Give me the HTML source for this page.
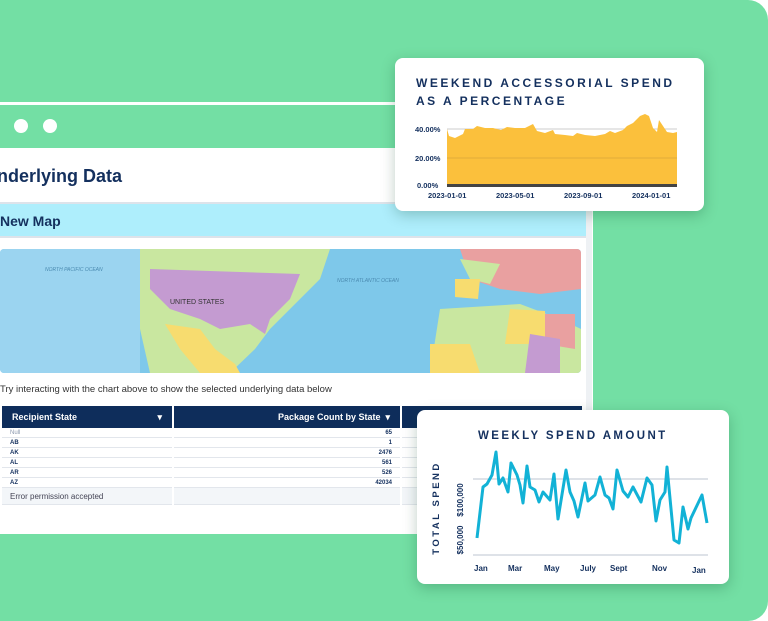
<!DOCTYPE html>
<html><head><meta charset="utf-8"><style>
*{margin:0;padding:0;box-sizing:border-box}
body{width:768px;height:621px;background:#fff;font-family:"Liberation Sans",sans-serif;overflow:hidden;position:relative}
.bg{position:absolute;left:0;top:0;width:768px;height:621px;background:#73dfa4;border-radius:0 20px 20px 0}
.win{position:absolute;left:-4px;top:102px;width:597px;height:432px;border:3px solid #fff;border-radius:0 6px 6px 0}
.dot{position:absolute;top:119px;width:14px;height:14px;border-radius:50%;background:#fff}
.content{position:absolute;left:0;top:148px;width:586px;height:383px;background:#fff}
.side{position:absolute;left:586px;top:148px;width:6px;height:383px;background:#eef1f4}
.title{position:absolute;left:-3px;top:166px;font-size:18px;font-weight:bold;color:#14305e}
.band{position:absolute;left:0;top:202px;width:586px;height:36px;background:#aeeefc;border-top:2px solid #dde3ea;border-bottom:2px solid #dde3ea}
.band span{position:absolute;left:0;top:9px;font-size:14px;font-weight:bold;color:#14305e}
.note{position:absolute;left:0;top:384px;font-size:9.5px;color:#333}
table{position:absolute;left:0;top:406px;border-collapse:separate;border-spacing:2px 0;font-size:6px;color:#14305e}
th{background:#0e2d5b;color:#fff;height:22px;font-size:9px;text-align:left;padding:0 10px}
td{height:10px;border-bottom:1px solid #e2e6ec;background:#fff;font-weight:bold;padding:0 8px}
.card{position:absolute;background:#fff;border-radius:8px;box-shadow:0 4px 14px rgba(0,60,30,.25)}
.h{font-weight:bold;color:#14305e;letter-spacing:2.5px;font-size:12px;white-space:nowrap}
</style></head><body>
<div class="bg"></div>
<div class="win"></div>
<div class="dot" style="left:14px"></div><div class="dot" style="left:43px"></div>
<div class="content"></div><div class="side"></div>
<div class="title">nderlying Data</div>
<div class="band"><span>New Map</span></div>
<svg style="position:absolute;left:0;top:249px" width="581" height="124">
<defs><clipPath id="m"><rect width="581" height="124" rx="4"/></clipPath></defs>
<g clip-path="url(#m)">
<rect width="581" height="124" fill="#7ec8ea"/>
<rect x="0" y="0" width="140" height="124" fill="#9bd4f0"/>
<path d="M140 0 H330 L320 30 L300 50 L270 80 L255 100 L230 124 H150 L140 80 Z" fill="#c9e7a0"/>
<path d="M150 20 L300 25 L290 50 L270 70 L265 85 L250 75 L220 80 L200 70 L170 60 L150 40 Z" fill="#c49bd1"/>
<path d="M165 75 L200 80 L215 100 L235 115 L240 124 H200 L180 100 Z" fill="#f7dc6f"/>
<path d="M460 0 H581 V40 L540 45 L500 40 L470 30 Z" fill="#e9a0a0"/>
<path d="M460 10 L500 15 L490 35 L470 30 Z" fill="#c9e7a0"/>
<path d="M440 60 L520 55 L560 70 L581 80 V124 H430 Z" fill="#c9e7a0"/>
<path d="M510 60 L545 62 L545 95 L505 95 Z" fill="#f7dc6f"/>
<path d="M545 65 L575 65 L575 100 L545 95 Z" fill="#e9a0a0"/>
<path d="M430 95 L470 95 L480 124 H430 Z" fill="#f7dc6f"/>
<path d="M455 30 L480 30 L478 50 L455 48 Z" fill="#f7dc6f"/>
<path d="M530 85 L560 90 L560 124 H525 Z" fill="#c49bd1"/>
<text x="45" y="22" font-size="5" fill="#4a8ab0" font-style="italic">NORTH PACIFIC OCEAN</text>
<text x="337" y="33" font-size="5" fill="#4a8ab0" font-style="italic">NORTH ATLANTIC OCEAN</text>
<text x="170" y="55" font-size="7" fill="#333">UNITED STATES</text>
</g></svg>
<div class="note">Try interacting with the chart above to show the selected underlying data below</div>
<table>
<tr><th style="width:170px">Recipient State <span style="float:right">▾</span></th><th style="width:226px;text-align:right">Package Count by State &nbsp;▾</th><th style="width:180px"></th></tr>
<tr><td style="color:#8a97ad;font-weight:normal">Null</td><td style="text-align:right">65</td><td></td></tr>
<tr><td>AB</td><td style="text-align:right">1</td><td></td></tr>
<tr><td>AK</td><td style="text-align:right">2476</td><td></td></tr>
<tr><td>AL</td><td style="text-align:right">561</td><td></td></tr>
<tr><td>AR</td><td style="text-align:right">526</td><td></td></tr>
<tr><td>AZ</td><td style="text-align:right">42034</td><td></td></tr>
<tr><td style="height:17px;background:#f3f6f9;font-size:8px;font-weight:normal;color:#445">Error permission accepted</td><td style="background:#f3f6f9"></td><td style="background:#f3f6f9"></td></tr>
</table>
<div class="card" style="left:395px;top:58px;width:309px;height:153px">
<div class="h" style="position:absolute;left:21px;top:16px;line-height:18px">WEEKEND ACCESSORIAL SPEND<br>AS A PERCENTAGE</div>
<svg style="position:absolute;left:0;top:0" width="309" height="153" font-family="Liberation Sans" font-size="7.5" font-weight="bold" fill="#14305e">
<line x1="52" y1="71" x2="282" y2="71" stroke="#ccc"/>
<path d="M52 71 L54 78 L60 80 L68 76 L70 71 L78 71 L82 68 L90 70 L98 70 L106 72 L112 69 L120 70 L130 70 L138 66 L142 73 L150 75 L158 72 L160 76 L170 77 L178 78 L182 75 L190 77 L200 78 L210 76 L215 73 L220 75 L228 72 L232 68 L238 65 L245 58 L250 56 L254 58 L258 70 L262 74 L264 62 L268 68 L272 74 L278 75 L282 74 L282 128 L52 128 Z" fill="#fbc03c"/>
<line x1="52" y1="100" x2="282" y2="100" stroke="#d9a63a" stroke-width=".7"/>
<rect x="52" y="126" width="230" height="3" fill="#444"/>
<text x="20" y="74">40.00%</text><text x="20" y="103">20.00%</text><text x="22" y="130">0.00%</text>
<text x="33" y="140">2023-01-01</text><text x="101" y="140">2023-05-01</text><text x="169" y="140">2023-09-01</text><text x="237" y="140">2024-01-01</text>
</svg></div>
<div class="card" style="left:417px;top:410px;width:312px;height:174px">
<div class="h" style="position:absolute;left:61px;top:20px;font-size:11.5px;letter-spacing:2.4px">WEEKLY SPEND AMOUNT</div>
<svg style="position:absolute;left:-417px;top:-410px" width="768" height="621" font-family="Liberation Sans" font-size="8" font-weight="bold" fill="#14305e">
<line x1="473" y1="479" x2="708" y2="479" stroke="#bcc5d2"/>
<line x1="473" y1="555" x2="708" y2="555" stroke="#bcc5d2"/>
<polyline fill="none" stroke="#12b2d6" stroke-width="3" stroke-linejoin="round" points="477,538 483,487 487,484 492,475 496,452 499,484 503,478 508,492 511,463 517,475 520,485 523,503 527,466 530,487 535,490 539,502 543,492 550,500 554,474 558,519 566,470 570,492 574,501 578,517 585,483 588,501 595,495 600,477 605,495 609,498 613,509 617,470 623,491 628,497 633,487 641,502 647,478 652,485 656,521 660,500 665,492 667,467 674,540 679,543 683,507 688,529 691,518 702,495 707,523"/>
<text transform="translate(463,500) rotate(-90)" text-anchor="middle">$100,000</text>
<text transform="translate(463,540) rotate(-90)" text-anchor="middle">$50,000</text>
<text transform="translate(439,508) rotate(-90)" text-anchor="middle" font-size="9.5" letter-spacing="2.5">TOTAL SPEND</text>
<text x="474" y="571">Jan</text><text x="508" y="571">Mar</text><text x="544" y="571">May</text><text x="580" y="571">July</text><text x="610" y="571">Sept</text><text x="652" y="571">Nov</text><text x="692" y="573">Jan</text>
</svg></div>
</body></html>
